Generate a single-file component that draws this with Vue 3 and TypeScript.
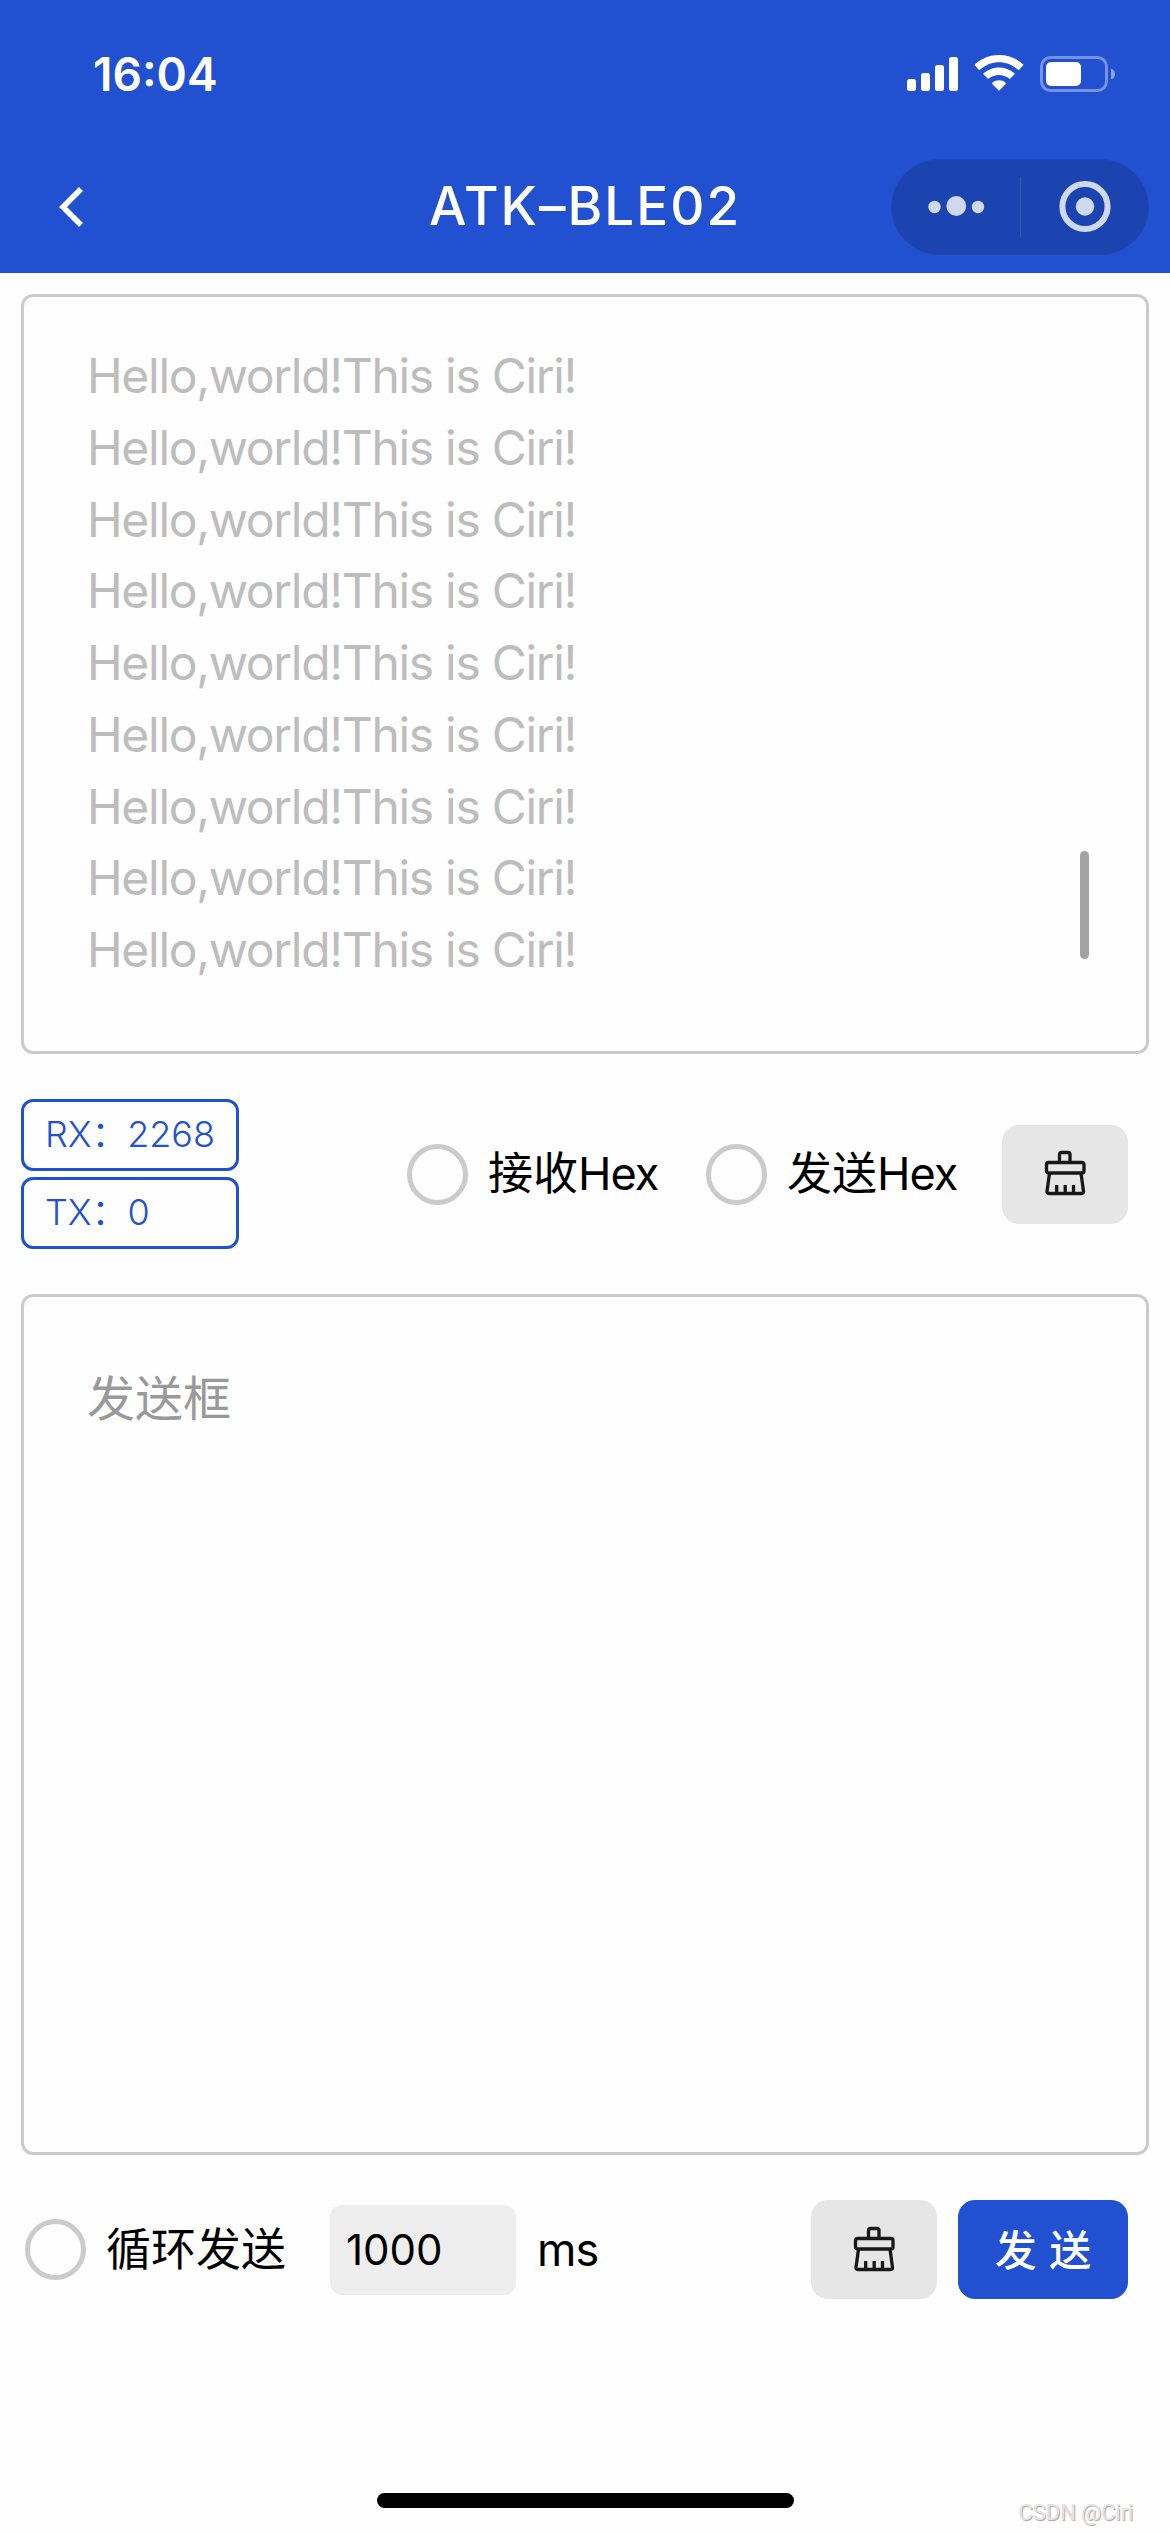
<script setup lang="ts">
import { ref } from 'vue'

const received = ref<string[]>(Array.from({ length: 9 }, () => 'Hello,world!This is Ciri!'))
const rxCount = ref(2268)
const txCount = ref(0)
const interval = ref('1000')
</script>

<template>
  <div class="page">
    <header class="header">
      <div class="status">
        <span class="time">16:04</span>
        <svg class="status-icons" width="210" height="44" viewBox="0 0 210 44">
          <g fill="#fff">
            <rect x="2" y="27" width="9" height="12" rx="2.5" />
            <rect x="16" y="21" width="9" height="18" rx="2.5" />
            <rect x="30" y="13" width="9" height="26" rx="2.5" />
            <rect x="44" y="5" width="9" height="34" rx="2.5" />
            <path d="M70 12.2C83.500 -0.200 104.500 -0.200 118 12.200Q118.500 12.800 118 13.400L114.200 17.700Q113.600 18.200 113 17.700C102 7.800 86 7.800 75 17.700Q74.400 18.200 73.800 17.700L70 13.400Q69.500 12.800 70 12.200Z" />
            <path d="M78.600 21.200C87.500 13.700 100.500 13.700 109.400 21.200Q110 21.800 109.400 22.400L105.300 26.500Q104.700 27 104.100 26.500C98.500 21.800 89.500 21.800 83.900 26.500Q83.300 27 82.700 26.500L78.600 22.400Q78 21.800 78.600 21.200Z" />
            <path d="M87.400 30.700C91.200 27.500 96.800 27.500 100.600 30.700Q101.300 31.300 100.700 31.900L94.700 38.300Q94 39 93.300 38.300L87.300 31.900Q86.700 31.300 87.400 30.700Z" />
            <rect x="141" y="10" width="35" height="24" rx="5" />
          </g>
          <rect x="136.500" y="5.500" width="65" height="33" rx="9" fill="none" stroke="#fff" stroke-opacity=".38" stroke-width="3" />
          <path d="M206 16.500Q210 18 210 22T206 27.500Z" fill="#fff" fill-opacity=".48" />
        </svg>
      </div>
      <div class="nav">
        <svg class="back" width="30" height="46" viewBox="0 0 30 46">
          <path d="M24 5L6 23L24 41" fill="none" stroke="#fff" stroke-width="5.600" />
        </svg>
        <h1 class="title">ATK–BLE02</h1>
        <svg class="capsule" width="258" height="96" viewBox="0 0 258 96">
          <rect x="0.500" y="0.500" width="257" height="95" rx="47.500" fill="#1c44b0" stroke="#2048b3" />
          <path d="M129.500 18V78" stroke="#3056b7" />
          <g fill="#ced9ee">
            <circle cx="43.500" cy="48" r="6.200" />
            <circle cx="65.300" cy="47" r="9.900" />
            <circle cx="87" cy="48" r="6.200" />
            <circle cx="194" cy="47.500" r="9.200" />
          </g>
          <circle cx="194" cy="47.500" r="22.600" fill="none" stroke="#ced9ee" stroke-width="6" />
        </svg>
      </div>
    </header>

    <main class="content">
      <section class="panel receive">
        <p v-for="(line, i) in received" :key="i" class="line"><span>{{ line }}</span></p>
        <i class="scrollbar"></i>
      </section>

      <div class="toolbar">
        <div class="counters">
          <div class="counter rx">RX：{{ rxCount }}</div>
          <div class="counter">TX：{{ txCount }}</div>
        </div>
        <div class="option first"><i class="radio"></i><span>接收<b>Hex</b></span></div>
        <div class="option second"><i class="radio"></i><span>发送<b>Hex</b></span></div>
        <button class="clear">
          <svg width="42" height="46" viewBox="0 0 42 46" fill="none" stroke="#181818" stroke-width="3.300" stroke-linejoin="round">
            <path d="M15.500 12V4.500Q15.500 2.500 17.500 2.500H24Q26 2.500 26 4.500V12" />
            <rect x="2.500" y="12.500" width="37.500" height="10.500" rx="2" />
            <path d="M5.500 23L3 41.500Q2.800 43.500 4.800 43.500H37.700Q39.700 43.500 39.500 41.500L37 23M12.700 43V35M21.200 43V35M29.500 43V35" />
          </svg>
        </button>
      </div>

      <section class="panel compose">
        <span class="placeholder">发送框</span>
      </section>

      <div class="sendbar">
        <div class="option loop"><i class="radio"></i><span>循环发送</span></div>
        <div class="interval">{{ interval }}</div>
        <span class="unit">ms</span>
        <button class="clear">
          <svg width="42" height="46" viewBox="0 0 42 46" fill="none" stroke="#181818" stroke-width="3.300" stroke-linejoin="round">
            <path d="M15.500 12V4.500Q15.500 2.500 17.500 2.500H24Q26 2.500 26 4.500V12" />
            <rect x="2.500" y="12.500" width="37.500" height="10.500" rx="2" />
            <path d="M5.500 23L3 41.500Q2.800 43.500 4.800 43.500H37.700Q39.700 43.500 39.500 41.500L37 23M12.700 43V35M21.200 43V35M29.500 43V35" />
          </svg>
        </button>
        <button class="send">发 送</button>
      </div>
    </main>

    <footer class="footer">
      <div class="home-indicator"></div>
      <span class="watermark">CSDN @Ciri</span>
    </footer>
  </div>
</template>

<style>
body {
  margin: 0;
  background: #fefefe;
}
</style>

<style scoped>
* {
  box-sizing: border-box;
}
.page {
  display: flex;
  flex-direction: column;
  width: 1170px;
  height: 2532px;
  overflow: hidden;
  background: #fefefe;
  color: #000;
  font-family: Inter, 'Noto Sans CJK SC', sans-serif;
}
.header {
  height: 273px;
  background: #2151d1;
  color: #fff;
}
.status {
  display: flex;
  justify-content: space-between;
  height: 141px;
  padding: 52px 55px 0 93px;
}
.time {
  font-size: 46px;
  font-weight: 600;
  line-height: 44px;
}
.nav {
  display: grid;
  grid-template-columns: 258px 1fr 258px;
  align-items: center;
  height: 132px;
  padding: 0 21px;
}
.back {
  margin-left: 36px;
}
.title {
  margin: 0 0 2px;
  text-align: center;
  font-size: 53px;
  font-weight: 500;
  line-height: 60px;
  letter-spacing: 2px;
  white-space: nowrap;
}
.content {
  padding: 21px 21px 0;
}
.panel {
  position: relative;
  border: 3px solid #cbcbcb;
  border-radius: 12px;
}
.receive {
  height: 760px;
  padding: 43px 63px 0;
}
.line {
  height: 71.75px;
  margin: 0;
  color: #bdbdbd;
  font-size: 48px;
  line-height: 71.75px;
  letter-spacing: -1.3px;
  white-space: nowrap;
}
.scrollbar {
  position: absolute;
  top: 554px;
  right: 57px;
  width: 9px;
  height: 108px;
  border-radius: 4.5px;
  background: #a3a3a3;
}
.toolbar {
  display: flex;
  align-items: center;
  height: 240px;
  padding-right: 21px;
}
.counters {
  display: flex;
  flex-direction: column;
  gap: 6px;
  width: 218px;
}
.counter {
  height: 72px;
  padding-left: 21px;
  border: 3px solid #2151d1;
  border-radius: 12px;
  color: #2151d1;
  font-size: 36px;
  font-weight: 350;
  line-height: 64px;
  letter-spacing: -0.1px;
  white-space: nowrap;
}
.option {
  display: flex;
  align-items: center;
  font-size: 45px;
  line-height: 60px;
  white-space: nowrap;
}
.option span {
  margin-left: 20px;
}
.option b {
  font-weight: 400;
  letter-spacing: -1px;
}
.first {
  width: 299px;
  margin-left: 168px;
}
.radio {
  flex: none;
  width: 61px;
  height: 61px;
  border: 5px solid #cbcbcb;
  border-radius: 50%;
}
.clear,
.send {
  display: flex;
  flex: none;
  align-items: center;
  justify-content: center;
  width: 126px;
  height: 99px;
  margin: 0 0 0 auto;
  padding: 0 0 2px;
  border: 0;
  border-radius: 17px;
  background: #e6e6e6;
}
.compose {
  height: 861px;
  padding: 65px 63px;
}
.placeholder {
  display: block;
  color: #999;
  font-size: 48px;
  line-height: 73px;
}
.sendbar {
  display: flex;
  align-items: center;
  height: 99px;
  margin-top: 45px;
  padding: 0 21px 0 4px;
}
.loop {
  width: 305px;
}
.interval {
  width: 186px;
  height: 90px;
  padding-left: 16px;
  border-radius: 12px;
  background: #eee;
  font-size: 42px;
  line-height: 89px;
}
.unit {
  margin-left: 21px;
  font-size: 45px;
  line-height: 60px;
  letter-spacing: -1px;
}
.send {
  width: 170px;
  margin-left: 21px;
  padding-bottom: 4px;
  background: #2151d1;
  color: #fff;
  font-family: 'Noto Sans CJK SC', sans-serif;
  font-size: 42px;
  font-weight: 500;
  line-height: 60px;
  word-spacing: 3px;
}
.footer {
  display: flex;
  position: relative;
  justify-content: center;
  margin-top: auto;
  height: 39px;
}
.home-indicator {
  width: 417px;
  height: 15px;
  border-radius: 7.5px;
  background: #000;
}
.watermark {
  position: absolute;
  right: 37px;
  top: 5px;
  color: #e4e4e4;
  font-family: Roboto, sans-serif;
  font-size: 22.500px;
  line-height: 28px;
  letter-spacing: -0.3px;
  text-shadow: 1px 1px 1px #a4a4a4;
}
</style>
